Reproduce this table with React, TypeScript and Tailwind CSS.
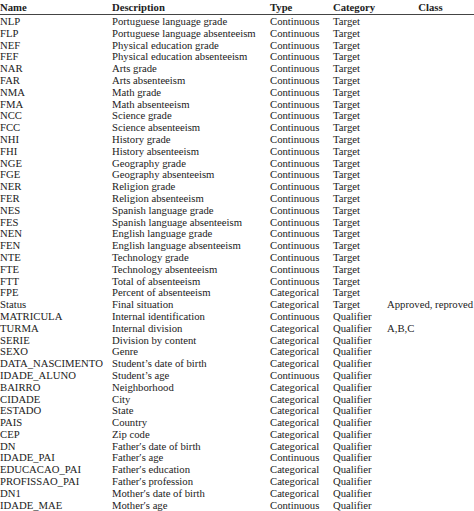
const rows: [string, string, string, string, string][] = [
  ["NLP", "Portuguese language grade", "Continuous", "Target", ""],
  ["FLP", "Portuguese language absenteeism", "Continuous", "Target", ""],
  ["NEF", "Physical education grade", "Continuous", "Target", ""],
  ["FEF", "Physical education absenteeism", "Continuous", "Target", ""],
  ["NAR", "Arts grade", "Continuous", "Target", ""],
  ["FAR", "Arts absenteeism", "Continuous", "Target", ""],
  ["NMA", "Math grade", "Continuous", "Target", ""],
  ["FMA", "Math absenteeism", "Continuous", "Target", ""],
  ["NCC", "Science grade", "Continuous", "Target", ""],
  ["FCC", "Science absenteeism", "Continuous", "Target", ""],
  ["NHI", "History grade", "Continuous", "Target", ""],
  ["FHI", "History absenteeism", "Continuous", "Target", ""],
  ["NGE", "Geography grade", "Continuous", "Target", ""],
  ["FGE", "Geography absenteeism", "Continuous", "Target", ""],
  ["NER", "Religion grade", "Continuous", "Target", ""],
  ["FER", "Religion absenteeism", "Continuous", "Target", ""],
  ["NES", "Spanish language grade", "Continuous", "Target", ""],
  ["FES", "Spanish language absenteeism", "Continuous", "Target", ""],
  ["NEN", "English language grade", "Continuous", "Target", ""],
  ["FEN", "English language absenteeism", "Continuous", "Target", ""],
  ["NTE", "Technology grade", "Continuous", "Target", ""],
  ["FTE", "Technology absenteeism", "Continuous", "Target", ""],
  ["FTT", "Total of absenteeism", "Continuous", "Target", ""],
  ["FPE", "Percent of absenteeism", "Categorical", "Target", ""],
  ["Status", "Final situation", "Categorical", "Target", "Approved, reproved"],
  ["MATRICULA", "Internal identification", "Continuous", "Qualifier", ""],
  ["TURMA", "Internal division", "Categorical", "Qualifier", "A,B,C"],
  ["SERIE", "Division by content", "Categorical", "Qualifier", ""],
  ["SEXO", "Genre", "Categorical", "Qualifier", ""],
  ["DATA_NASCIMENTO", "Student\u2019s date of birth", "Categorical", "Qualifier", ""],
  ["IDADE_ALUNO", "Student\u2019s age", "Continuous", "Qualifier", ""],
  ["BAIRRO", "Neighborhood", "Categorical", "Qualifier", ""],
  ["CIDADE", "City", "Categorical", "Qualifier", ""],
  ["ESTADO", "State", "Categorical", "Qualifier", ""],
  ["PAIS", "Country", "Categorical", "Qualifier", ""],
  ["CEP", "Zip code", "Categorical", "Qualifier", ""],
  ["DN", "Father\u2032s date of birth", "Categorical", "Qualifier", ""],
  ["IDADE_PAI", "Father\u2032s age", "Continuous", "Qualifier", ""],
  ["EDUCACAO_PAI", "Father\u2032s education", "Categorical", "Qualifier", ""],
  ["PROFISSAO_PAI", "Father\u2032s profession", "Categorical", "Qualifier", ""],
  ["DN1", "Mother\u2032s date of birth", "Categorical", "Qualifier", ""],
  ["IDADE_MAE", "Mother\u2032s age", "Continuous", "Qualifier", ""],
];

export default function App() {
  return (
    <div className="w-[474px] h-[511px] overflow-hidden bg-white text-[#222] text-[10.7px] leading-[11.8px] whitespace-nowrap" style={{ fontFamily: '"Liberation Serif", "Times New Roman", serif' }}>
      {/* Header */}
      <div className="flex h-[15px] border-b border-[#444] font-bold leading-[12px] pt-px">
        <div className="w-[112px] shrink-0">Name</div>
        <div className="w-[158px] shrink-0">Description</div>
        <div className="w-[63px] shrink-0">Type</div>
        <div className="w-[54px] shrink-0">Category</div>
        <div className="w-[87px] shrink-0 text-center">Class</div>
      </div>

      {/* Body */}
      <div className="pt-px">
        {rows.map(([name, desc, type, cat, cls]) => (
          <div key={name} className="flex h-[11.8px]">
            <div className="w-[112px] shrink-0">{name}</div>
            <div className="w-[158px] shrink-0">{desc}</div>
            <div className="w-[63px] shrink-0">{type}</div>
            <div className="w-[54px] shrink-0">{cat}</div>
            <div className="w-[87px] shrink-0">{cls}</div>
          </div>
        ))}
      </div>
    </div>
  );
}
